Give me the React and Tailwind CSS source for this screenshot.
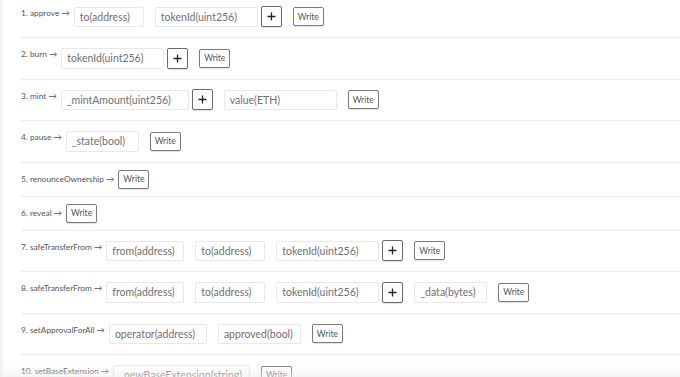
import React from "react";

const rows = [
  {
    label: "1. approve →",
    items: [
      { type: "input", ph: "to(address)", w: "w-[70px]" },
      { type: "input", ph: "tokenId(uint256)", w: "w-[103px]", plus: true },
      { type: "write" },
    ],
  },
  {
    label: "2. burn →",
    items: [
      { type: "input", ph: "tokenId(uint256)", w: "w-[103px]", plus: true },
      { type: "write" },
    ],
  },
  {
    label: "3. mint →",
    items: [
      { type: "input", ph: "_mintAmount(uint256)", w: "w-[128px]", plus: true },
      { type: "input", ph: "value(ETH)", w: "w-[113px]" },
      { type: "write" },
    ],
  },
  {
    label: "4. pause →",
    items: [
      { type: "input", ph: "_state(bool)", w: "w-[73px]" },
      { type: "write" },
    ],
  },
  { label: "5. renounceOwnership →", items: [{ type: "write" }] },
  { label: "6. reveal →", items: [{ type: "write" }] },
  {
    label: "7. safeTransferFrom →",
    items: [
      { type: "input", ph: "from(address)", w: "w-[78px]" },
      { type: "input", ph: "to(address)", w: "w-[70px]" },
      { type: "input", ph: "tokenId(uint256)", w: "w-[103px]", plus: true },
      { type: "write" },
    ],
  },
  {
    label: "8. safeTransferFrom →",
    items: [
      { type: "input", ph: "from(address)", w: "w-[78px]" },
      { type: "input", ph: "to(address)", w: "w-[70px]" },
      { type: "input", ph: "tokenId(uint256)", w: "w-[103px]", plus: true },
      { type: "input", ph: "_data(bytes)", w: "w-[73px]" },
      { type: "write" },
    ],
  },
  {
    label: "9. setApprovalForAll →",
    items: [
      { type: "input", ph: "operator(address)", w: "w-[98px]" },
      { type: "input", ph: "approved(bool)", w: "w-[83px]" },
      { type: "write" },
    ],
  },
  {
    label: "10. setBaseExtension →",
    items: [
      { type: "input", ph: "_newBaseExtension(string)", w: "w-[137px]" },
      { type: "write" },
    ],
  },
];

const Field = ({ ph, w, plus }) => (
  <div className="flex items-center gap-[3px]">
    <input
      placeholder={ph}
      className={`${w} h-[20.5px] my-[3px] rounded-[2px] border border-[#e8e8e8] bg-white px-[5px] text-[10.5px] text-[#444] placeholder:text-[#707070] outline-none`}
    />
    {plus && (
      <button className="flex h-[21px] w-[21px] items-center justify-center rounded-[2px] border border-[#6b6b6b] bg-white shadow-[0_1px_1px_rgba(0,0,0,0.12)]">
        <svg width="9" height="9" viewBox="0 0 9 9">
          <path d="M4.5 0.5v8M0.5 4.5h8" stroke="#222" strokeWidth="1.3" />
        </svg>
      </button>
    )}
  </div>
);

const WriteBtn = () => (
  <button className="h-[19px] w-[31px] rounded-[2px] border border-[#7a7a7a] bg-white text-[8.5px] leading-none text-[#555] shadow-[0_1px_1px_rgba(0,0,0,0.12)]">
    Write
  </button>
);

export default function App() {
  return (
    <div
      className="relative h-[377px] w-[680px] overflow-hidden bg-white"
      style={{ fontFamily: "Lato, 'Noto Sans', sans-serif" }}
    >
      <div className="absolute left-0 top-0 h-full w-[3px] bg-[#f4f4f4]" />
      <div className="-mt-[3.5px] pl-[21px]">
        {rows.map((r, i) => (
          <div
            key={i}
            className="flex items-start border-b border-[#ececec] py-[7px]"
          >
            <span className="mr-[4px] whitespace-nowrap pt-[2px] text-[8.3px] leading-[14px] text-[#555]">
              {r.label}
            </span>
            <div className="flex items-center gap-[11px]">
              {r.items.map((it, j) =>
                it.type === "input" ? (
                  <Field key={j} {...it} />
                ) : (
                  <WriteBtn key={j} />
                )
              )}
            </div>
          </div>
        ))}
      </div>
      <div className="pointer-events-none absolute bottom-0 left-0 h-[12px] w-full bg-gradient-to-b from-transparent to-[#eeeeee]/60" />
    </div>
  );
}
